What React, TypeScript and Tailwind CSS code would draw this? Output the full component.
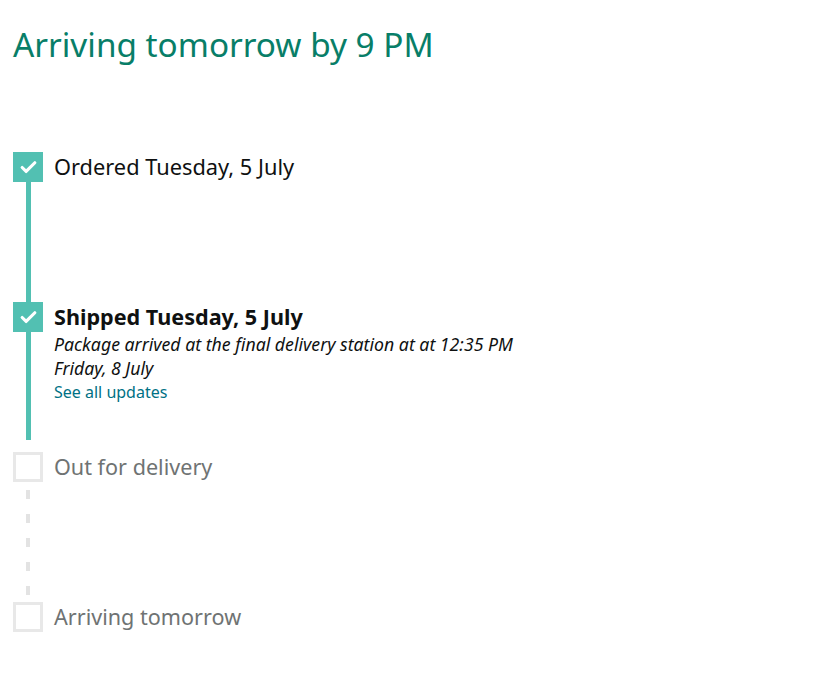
import { Check } from "lucide-react";

type Step = {
  label: string;
  done: boolean;
  bold?: boolean;
  details?: string[];
  link?: string;
  connector?: "solid" | "solid-gap" | "dashed" | null;
};

const steps: Step[] = [
  { label: "Ordered Tuesday, 5 July", done: true, connector: "solid" },
  {
    label: "Shipped Tuesday, 5 July",
    done: true,
    bold: true,
    details: ["Package arrived at the final delivery station at at 12:35 PM", "Friday, 8 July"],
    link: "See all updates",
    connector: "solid-gap",
  },
  { label: "Out for delivery", done: false, connector: "dashed" },
  { label: "Arriving tomorrow", done: false, connector: null },
];

function Box({ done }: { done: boolean }) {
  if (done) {
    return (
      <div className="flex h-[30px] w-[30px] shrink-0 items-center justify-center bg-[#52c0b2]">
        <Check className="h-[19px] w-[19px] text-white" strokeWidth={4} />
      </div>
    );
  }
  return <div className="h-[30px] w-[30px] shrink-0 border-[3px] border-[#e8e8e8] bg-white" />;
}

export default function App() {
  return (
    <main className="min-h-screen bg-white px-[13px] pt-[22px] font-['Noto_Sans',sans-serif]">
      <h1 className="text-[33.3px] leading-[44px] text-[#087e68]">Arriving tomorrow by 9 PM</h1>

      <div className="mt-[86px] flex flex-col">
        {steps.map((step) => (
          <div key={step.label} className={`flex gap-[11px] ${step.connector ? "h-[150px]" : ""}`}>
            <div className="flex w-[30px] shrink-0 flex-col items-center">
              <Box done={step.done} />
              {step.connector === "solid" && <div className="w-[5px] flex-1 bg-[#52c0b2]" />}
              {step.connector === "solid-gap" && <div className="mb-[12px] w-[5px] flex-1 bg-[#52c0b2]" />}
              {step.connector === "dashed" && (
                <div className="mb-[7px] mt-[8px] w-[4px] flex-1 bg-[repeating-linear-gradient(to_bottom,#e3e3e3_0_9px,transparent_9px_24px)]" />
              )}
            </div>
            <div className="flex flex-col">
              <p
                className={`leading-[30px] ${
                  step.bold
                    ? "text-[21.6px] font-bold text-[#0f1111]"
                    : step.done
                      ? "text-[21.8px] text-[#0f1111]"
                      : "text-[21.6px] text-[#6f7373]"
                }`}
              >
                {step.label}
              </p>
              {step.details?.map((d) => (
                <p key={d} className="text-[17.7px] italic leading-[24px] text-[#0f1111]">
                  {d}
                </p>
              ))}
              {step.link && <p className="text-[16px] leading-[24px] text-[#007185]">{step.link}</p>}
            </div>
          </div>
        ))}
      </div>
    </main>
  );
}
